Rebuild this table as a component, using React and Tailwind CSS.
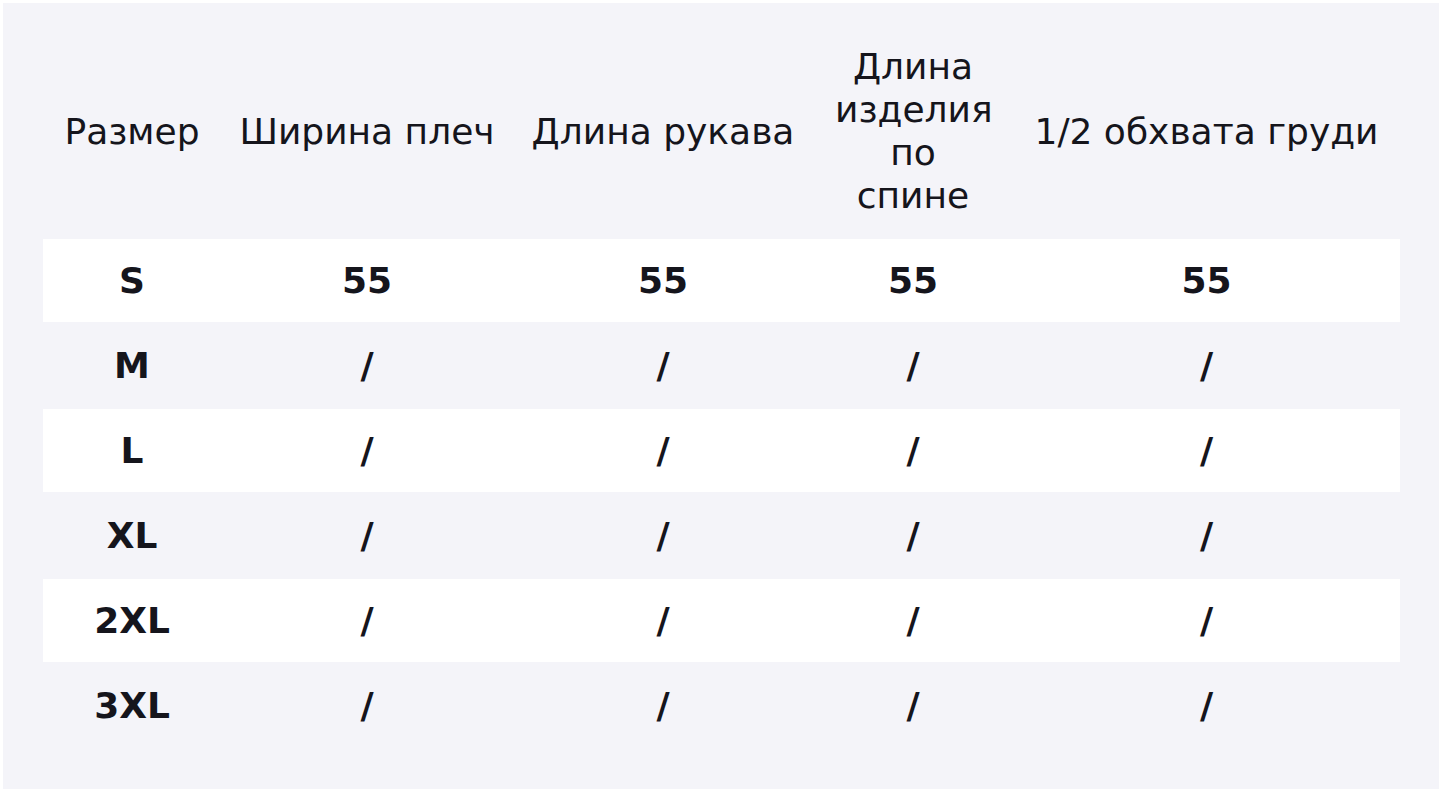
import React from 'react';

const headers = ['Размер', 'Ширина плеч', 'Длина рукава', 'Длина изделия по спине', '1/2 обхвата груди'];

const rows = [
  ['S', '55', '55', '55', '55'],
  ['M', '/', '/', '/', '/'],
  ['L', '/', '/', '/', '/'],
  ['XL', '/', '/', '/', '/'],
  ['2XL', '/', '/', '/', '/'],
  ['3XL', '/', '/', '/', '/'],
];

const App = () => {
  return (
    <div className="min-h-screen bg-white pt-[3px] pl-[3px] pr-[4px]">
      <div
        className="bg-[#f4f4f9] px-[40px] pt-[40px] pb-[40px] text-[#15151c]"
        style={{ fontFamily: '"DejaVu Sans", Verdana, sans-serif' }}
      >
        <table className="w-[1357px] table-fixed border-collapse">
          <colgroup>
            <col className="w-[178px]" />
            <col className="w-[292px]" />
            <col className="w-[300px]" />
            <col className="w-[200px]" />
            <col className="w-[387px]" />
          </colgroup>
          <thead>
            <tr className="h-[196px]">
              {headers.map((h, j) => (
                <th
                  key={h}
                  className={`pb-[20px] text-center align-middle text-[36px] font-normal leading-[43px] ${j === 3 ? 'px-[22px]' : 'px-[10px] whitespace-nowrap'}`}
                >
                  {h}
                </th>
              ))}
            </tr>
          </thead>
          <tbody>
            {rows.map((r, i) => (
              <tr key={r[0]} className={i % 2 === 0 ? 'h-[83px] bg-white' : 'h-[87px]'}>
                {r.map((c, j) => (
                  <td key={j} className="px-[10px] text-center align-middle text-[36px] font-bold leading-[43px]">
                    {c}
                  </td>
                ))}
              </tr>
            ))}
          </tbody>
        </table>
      </div>
    </div>
  );
};

export default App;
